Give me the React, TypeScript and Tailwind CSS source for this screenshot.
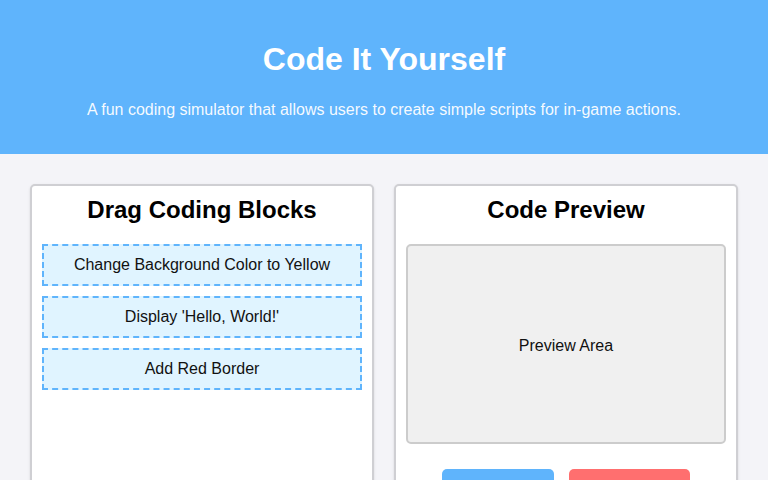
import { useState } from 'react';

const blocks = [
  { id: 'bg', label: 'Change Background Color to Yellow' },
  { id: 'hello', label: "Display 'Hello, World!'" },
  { id: 'border', label: 'Add Red Border' },
];

export default function App() {
  const [applied, setApplied] = useState<string[]>([]);

  return (
    <div className="min-h-screen bg-[#f4f4f8] font-['Liberation_Sans',Arial,sans-serif] text-[#111]">
      {/* HEADER */}
      <header className="bg-[#5fb4fc] text-white text-center pt-[41px] pb-[35px]">
        <h1 className="text-[32px] leading-[37px] font-bold">Code It Yourself</h1>
        <p className="mt-[23px] text-base leading-[18px] text-white/95">
          A fun coding simulator that allows users to create simple scripts for in-game actions.
        </p>
      </header>

      {/* MAIN */}
      <main className="grid grid-cols-2 gap-5 px-[30px] pt-[30px] pb-[30px]">
        <section className="bg-white border-2 border-[#cfcfd3] rounded-[5px] shadow-sm p-[10px]">
          <h2 className="text-2xl leading-7 font-bold text-center text-black">Drag Coding Blocks</h2>
          <div className="mt-5 flex flex-col gap-[10px]">
            {blocks.map(b => (
              <div
                key={b.id}
                draggable
                onClick={() => setApplied([...applied, b.id])}
                className="border-2 border-dashed border-[#5fb4fc] bg-[#e0f4ff] py-[10px] text-center text-base leading-[18px] cursor-move"
              >
                {b.label}
              </div>
            ))}
          </div>
          <div className="h-[120px]" />
        </section>

        <section className="bg-white border-2 border-[#cfcfd3] rounded-[5px] shadow-sm p-[10px]">
          <h2 className="text-2xl leading-7 font-bold text-center text-black">Code Preview</h2>
          <div
            className={`mt-5 h-[200px] pt-[3px] border-2 border-[#cccccc] rounded-[5px] flex items-center justify-center text-base ${applied.includes('bg') ? 'bg-yellow-200' : 'bg-[#f0f0f0]'}`}
          >
            {applied.includes('hello') ? 'Hello, World!' : 'Preview Area'}
          </div>
          <div className="mt-[25px] flex justify-center gap-[15px]">
            <button className="bg-[#5fb4fc] text-white rounded-[5px] px-5 py-[10px] text-base leading-[18px]">Run Code</button>
            <button onClick={() => setApplied([])} className="bg-[#ff6f6f] text-white rounded-[5px] px-5 py-[10px] text-base leading-[18px]">Clear Code</button>
          </div>
        </section>
      </main>
    </div>
  );
}
